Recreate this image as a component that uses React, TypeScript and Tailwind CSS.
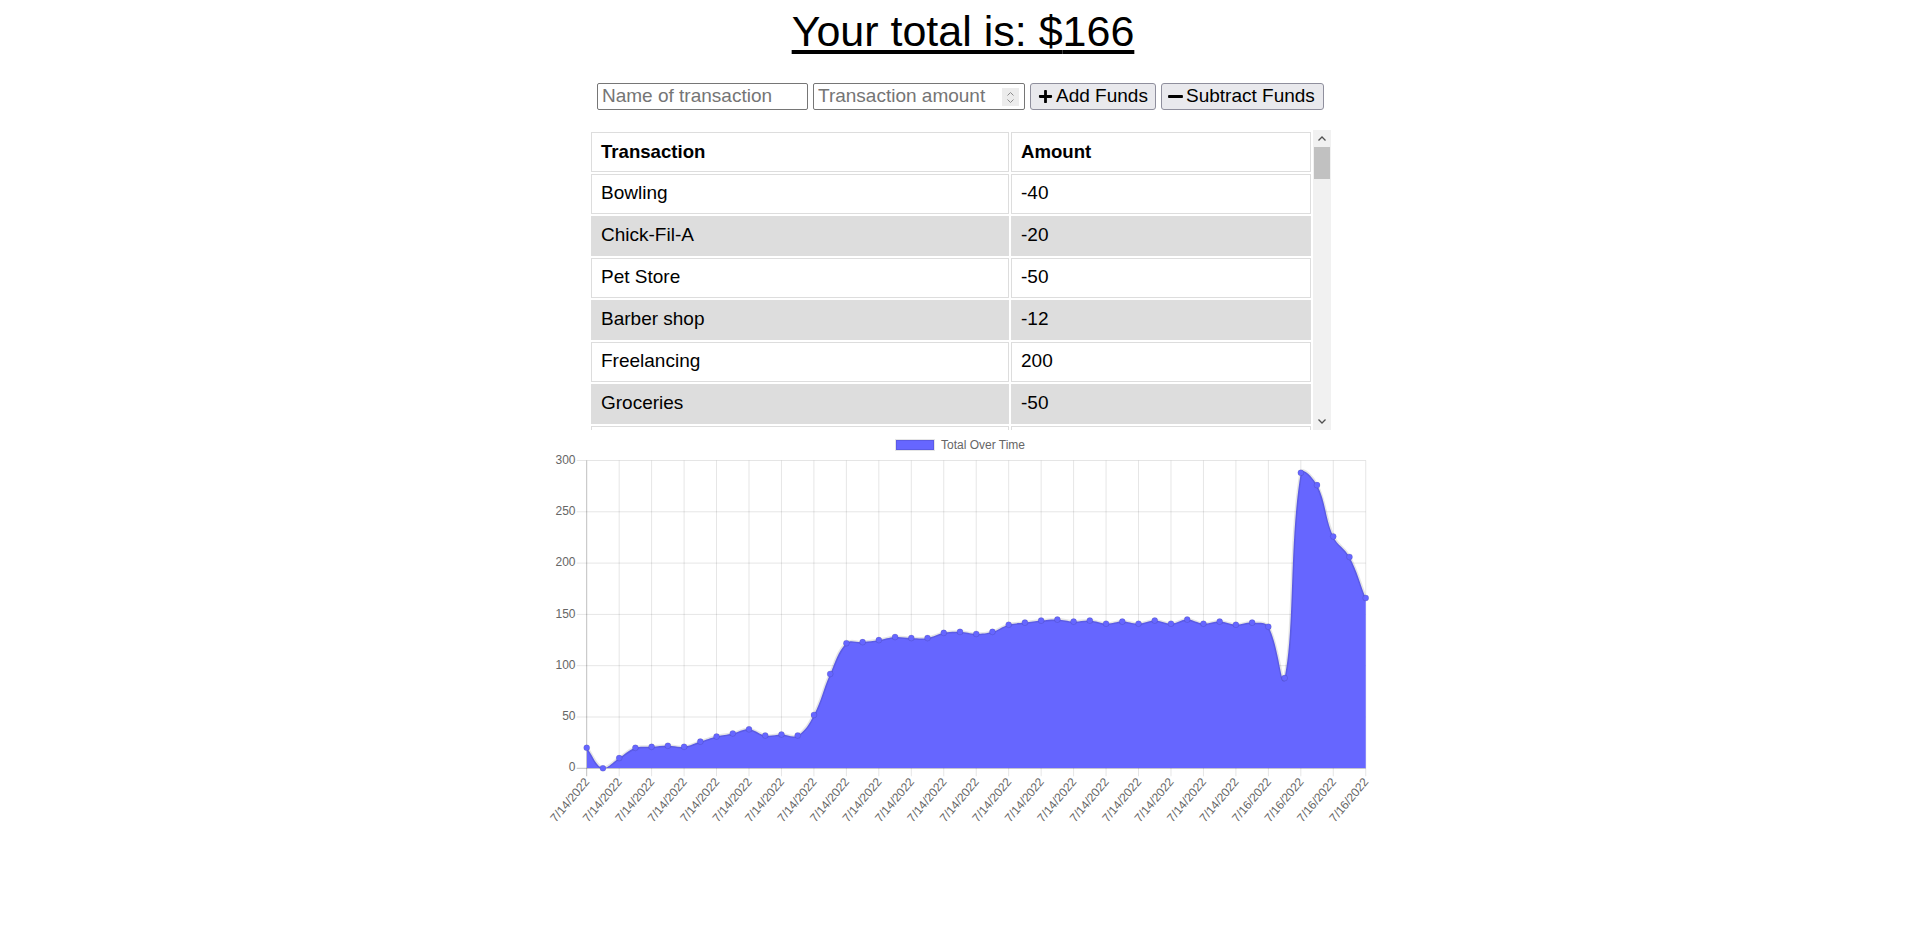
import React from 'react';
import { FaPlus, FaMinus } from 'react-icons/fa';

type Pt = { x: number; y: number };

const transactions = [
  { name: 'Bowling', value: -40 },
  { name: 'Chick-Fil-A', value: -20 },
  { name: 'Pet Store', value: -50 },
  { name: 'Barber shop', value: -12 },
  { name: 'Freelancing', value: 200 },
  { name: 'Groceries', value: -50 },
];

const totals = [
  20, 0, 10, 20, 21, 22, 21, 26, 31, 34, 38, 32, 33, 32, 52, 92, 122, 123, 125, 128, 127, 127, 132, 133, 131,
  133, 140, 142, 144, 145, 143, 144, 141, 143, 141, 144, 141, 145, 141, 143, 140, 142, 138, 88, 288, 276, 226,
  206, 166,
];

// plot area inside the svg
const X0 = 43.7;
const STEP = 16.23;
const TOP = 30.5;
const BOTTOM = 338.3;
const RIGHT = X0 + STEP * (totals.length - 1);
const yOf = (v: number) => BOTTOM - v * ((BOTTOM - TOP) / 300);

// same spline as chart.js (tension 0.4)
const buildPath = (pts: Pt[]) => {
  const cps = pts.map((cur, i) => {
    const prev = pts[i - 1] || cur;
    const next = pts[i + 1] || cur;
    const d01 = Math.hypot(cur.x - prev.x, cur.y - prev.y);
    const d12 = Math.hypot(next.x - cur.x, next.y - cur.y);
    let s01 = d01 / (d01 + d12);
    let s12 = d12 / (d01 + d12);
    if (isNaN(s01)) s01 = 0;
    if (isNaN(s12)) s12 = 0;
    const fa = 0.4 * s01;
    const fb = 0.4 * s12;
    const clamp = (y: number) => Math.max(TOP, Math.min(BOTTOM, y));
    return {
      prev: { x: cur.x - fa * (next.x - prev.x), y: clamp(cur.y - fa * (next.y - prev.y)) },
      next: { x: cur.x + fb * (next.x - prev.x), y: clamp(cur.y + fb * (next.y - prev.y)) },
    };
  });
  let d = `M${pts[0].x},${pts[0].y}`;
  for (let i = 1; i < pts.length; i++) {
    const a = cps[i - 1].next;
    const b = cps[i].prev;
    d += ` C${a.x},${a.y} ${b.x},${b.y} ${pts[i].x},${pts[i].y}`;
  }
  return d;
};

const Chart: React.FC = () => {
  const pts = totals.map((v, i) => ({ x: X0 + i * STEP, y: yOf(v) }));
  const line = buildPath(pts);
  const area = `${line} L${RIGHT},${BOTTOM} L${X0},${BOTTOM} Z`;
  const font = { fontFamily: '"Liberation Sans", Arial, sans-serif' };

  return (
    <svg width="840" height="400" viewBox="0 0 840 400" className="block">
      <defs>
        <clipPath id="plot">
          <rect x={X0} y={TOP - 4} width={RIGHT - X0 + 4} height={BOTTOM - TOP + 4} />
        </clipPath>
      </defs>

      {/* legend */}
      <rect x="353" y="10" width="38" height="10" fill="#6666ff" stroke="rgba(0,0,0,0.1)" strokeWidth="2" />
      <text x="398" y="15.5" fontSize="12" fill="#666" dominantBaseline="middle" style={font}>
        Total Over Time
      </text>

      {/* horizontal grid + y labels */}
      {[0, 50, 100, 150, 200, 250, 300].map((v) => (
        <g key={v}>
          <line
            x1={X0 - 10}
            x2={RIGHT}
            y1={yOf(v)}
            y2={yOf(v)}
            stroke={v === 0 ? 'rgba(0,0,0,0.25)' : 'rgba(0,0,0,0.1)'}
            strokeWidth="1"
          />
          <text x="32.5" y={yOf(v)} fontSize="12" fill="#666" textAnchor="end" dominantBaseline="middle" style={font}>
            {v}
          </text>
        </g>
      ))}

      {/* vertical grid + x labels */}
      {Array.from({ length: 25 }, (_, i) => {
        const x = X0 + i * STEP * 2;
        return (
          <g key={i}>
            <line
              x1={x}
              x2={x}
              y1={TOP}
              y2={BOTTOM + 8}
              stroke={i === 0 ? 'rgba(0,0,0,0.25)' : 'rgba(0,0,0,0.1)'}
              strokeWidth="1"
            />
            <text
              x={x + 1}
              y={350}
              fontSize="12"
              fill="#666"
              textAnchor="end"
              dominantBaseline="middle"
              transform={`rotate(-50 ${x + 1} 350)`}
              style={font}
            >
              {i >= 21 ? '7/16/2022' : '7/14/2022'}
            </text>
          </g>
        );
      })}

      <g clipPath="url(#plot)">
        <path d={area} fill="#6666ff" />
        <path d={line} fill="none" stroke="rgba(0,0,0,0.1)" strokeWidth="3" />
      </g>
      {pts.map((p, i) => (
        <circle key={i} cx={p.x} cy={p.y} r="3" fill="#6666ff" stroke="rgba(0,0,0,0.1)" strokeWidth="1" />
      ))}
    </svg>
  );
};

const App: React.FC = () => {
  return (
    <div className="min-h-screen bg-white text-black font-['Liberation_Sans',Arial,sans-serif] flex flex-col items-center">
      <h1 className="mt-[7px] text-[43px] leading-[49px] font-normal underline decoration-[3.5px] underline-offset-[3.5px]">
        Your total is: ${166}
      </h1>

      <form className="mt-[26px] flex items-center gap-[5px] pr-[5px] text-[19px]" onSubmit={(e) => e.preventDefault()}>
        <input
          type="text"
          placeholder="Name of transaction"
          className="w-[211px] h-[27px] px-[4px] border border-[#767676] rounded-[2px] bg-white placeholder:text-[#757575] outline-none"
        />
        <div className="relative">
          <input
            type="text"
            placeholder="Transaction amount"
            className="w-[212px] h-[27px] px-[4px] border border-[#767676] rounded-[2px] bg-white placeholder:text-[#757575] outline-none"
          />
          <div className="absolute right-[6px] top-[6px] w-[17px] h-[18px] bg-[#ececec] flex flex-col items-center justify-center gap-[3px]">
            <svg width="7" height="4" viewBox="0 0 7 4">
              <polyline points="0.5,3.5 3.5,0.5 6.5,3.5" fill="none" stroke="#8a8a8a" strokeWidth="1" />
            </svg>
            <svg width="7" height="4" viewBox="0 0 7 4">
              <polyline points="0.5,0.5 3.5,3.5 6.5,0.5" fill="none" stroke="#8a8a8a" strokeWidth="1" />
            </svg>
          </div>
        </div>
        <button
          type="button"
          className="w-[126px] h-[27px] pl-[7px] flex items-center gap-[3px] bg-[#e9e9ed] border border-[#8f8f9d] rounded-[3px]"
        >
          <FaPlus className="w-[15px] h-[15px]" />
          Add Funds
        </button>
        <button
          type="button"
          className="w-[163px] h-[27px] pl-[5px] flex items-center gap-[2px] bg-[#e9e9ed] border border-[#8f8f9d] rounded-[3px]"
        >
          <FaMinus className="w-[17px] h-[17px]" />
          Subtract Funds
        </button>
      </form>

      <div className="mt-[19px] mr-[6px] flex h-[300px]">
        <div className="w-[724px] overflow-hidden">
          <table className="w-[724px] table-fixed border-separate border-spacing-[2px] text-[19px]">
            <thead>
              <tr>
                <th className="w-[418px] h-[40px] border border-[#ddd] px-[9px] text-left font-bold text-[18.6px]">Transaction</th>
                <th className="h-[40px] border border-[#ddd] px-[9px] text-left font-bold text-[18.6px]">Amount</th>
              </tr>
            </thead>
            <tbody>
              {transactions.map((t, i) => (
                <tr key={t.name} className={i % 2 === 1 ? 'bg-[#dddddd]' : 'bg-white'}>
                  <td className="h-[40px] border border-[#ddd] px-[9px]">{t.name}</td>
                  <td className="h-[40px] border border-[#ddd] px-[9px]">{t.value}</td>
                </tr>
              ))}
              {/* next row, only its top edge shows */}
              <tr className="bg-white">
                <td className="h-[40px] border border-[#ddd]" />
                <td className="h-[40px] border border-[#ddd]" />
              </tr>
            </tbody>
          </table>
        </div>
        {/* scrollbar */}
        <div className="w-[18px] h-full bg-[#f1f1f1] flex flex-col">
          <div className="h-[17px] flex items-center justify-center">
            <svg width="8" height="5" viewBox="0 0 8 5">
              <polyline points="0.5,4.5 4,1 7.5,4.5" fill="none" stroke="#505050" strokeWidth="1.3" />
            </svg>
          </div>
          <div className="h-[32px] mx-[1px] bg-[#c1c1c1]" />
          <div className="flex-1" />
          <div className="h-[17px] flex items-center justify-center">
            <svg width="8" height="5" viewBox="0 0 8 5">
              <polyline points="0.5,0.5 4,4 7.5,0.5" fill="none" stroke="#505050" strokeWidth="1.3" />
            </svg>
          </div>
        </div>
      </div>

      <div className="mt-[0px]">
        <Chart />
      </div>
    </div>
  );
};

export default App;
